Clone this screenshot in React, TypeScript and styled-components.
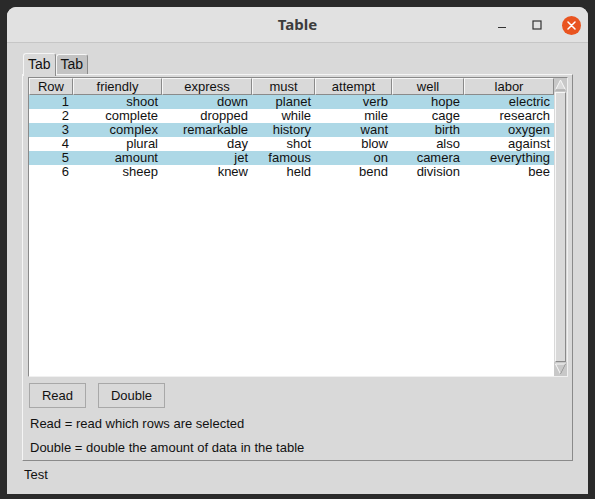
import React from "react";
import styled, { createGlobalStyle } from "styled-components";

const Global = createGlobalStyle`
  html, body { margin: 0; padding: 0; background: #2a2a2a; }
  body { font-family: "Liberation Sans", Arial, sans-serif; }
`;

const Desktop = styled.div`
  width: 595px;
  height: 499px;
  padding: 7px;
  box-sizing: border-box;
  background: #2a2a2a;
`;

const Window = styled.div`
  width: 581px;
  height: 487px;
  border-radius: 9px 9px 0 0;
  overflow: hidden;
  display: flex;
  flex-direction: column;
  background: #d9d9d9;
`;

const TitleBar = styled.div`
  height: 36px;
  flex: none;
  background: #e1e1e1;
  border-bottom: 1px solid #c6c6c6;
  box-sizing: border-box;
  display: flex;
  align-items: center;
  justify-content: center;
  position: relative;
`;

const Title = styled.div`
  font-family: "Noto Sans", "DejaVu Sans", sans-serif;
  font-weight: 700;
  font-size: 15px;
  color: #3c3c3c;
  margin-top: -1px;
`;

const Controls = styled.div`
  position: absolute;
  right: 0;
  top: 0;
  height: 36px;
  display: flex;
  align-items: center;
`;

const CtrlSlot = styled.div<{ $w: number }>`
  width: ${(p) => p.$w}px;
  height: 36px;
  display: flex;
  align-items: center;
  justify-content: center;
`;

const Close = styled.div`
  width: 19px;
  height: 19px;
  border-radius: 50%;
  background: #e95420;
  display: flex;
  align-items: center;
  justify-content: center;
`;

const Content = styled.div`
  flex: 1;
  display: flex;
  flex-direction: column;
  padding: 10px 0 0 15px;
`;

const TabRow = styled.div`
  display: flex;
  align-items: flex-end;
  height: 21px;
  padding-left: 1px;
  position: relative;
  z-index: 1;
`;

const TabBtn = styled.div<{ $active?: boolean }>`
  box-sizing: border-box;
  height: ${(p) => (p.$active ? 23 : 20)}px;
  margin-bottom: ${(p) => (p.$active ? -2 : 0)}px;
  padding: 0 4px;
  display: flex;
  align-items: flex-start;
  padding-top: ${(p) => (p.$active ? 2 : 1)}px;
  font-size: 14px;
  color: #111;
  background: ${(p) => (p.$active ? "#d9d9d9" : "#c3c3c3")};
  border: 1px solid #f5f5f5;
  border-right-color: #8c8c8c;
  border-bottom: none;
  border-radius: 3px 3px 0 0;
  line-height: 17px;
`;

const Panel = styled.div`
  width: 551px;
  height: 387px;
  box-sizing: border-box;
  border: 1px solid #f5f5f5;
  border-right-color: #8a8a8a;
  border-bottom-color: #8a8a8a;
  padding: 2px 0 0 5px;
  display: flex;
  flex-direction: column;
`;

const TableFrame = styled.div`
  width: 540px;
  height: 300px;
  box-sizing: border-box;
  border: 1px solid #8a8a8a;
  border-right-color: #f0f0f0;
  border-bottom-color: #f0f0f0;
  display: flex;
  background: #ffffff;
`;

const TableArea = styled.div`
  width: 525px;
  display: flex;
  flex-direction: column;
`;

const cols = "44px 89px 90px 63px 77px 72px 90px";

const HeaderRow = styled.div`
  display: grid;
  grid-template-columns: ${cols};
  height: 17px;
  background: #d9d9d9;
`;

const HeaderCell = styled.div`
  box-sizing: border-box;
  border: 1px solid #f7f7f7;
  border-right-color: #8a8a8a;
  border-bottom-color: #8a8a8a;
  font-size: 13px;
  line-height: 15px;
  text-align: center;
  color: #111;
`;

const DataRow = styled.div<{ $odd: boolean }>`
  display: grid;
  grid-template-columns: ${cols};
  height: 14px;
  background: ${(p) => (p.$odd ? "#add8e6" : "#ffffff")};
`;

const DataCell = styled.div`
  font-size: 13px;
  line-height: 14px;
  text-align: right;
  padding-right: 4px;
  color: #111;
  white-space: nowrap;
  overflow: hidden;
`;

const ScrollBar = styled.div`
  width: 13px;
  display: flex;
  flex-direction: column;
  background: #d9d9d9;
`;

const Arrow = styled.div`
  height: 14px;
  flex: none;
  background: #c8c8c8;
  display: flex;
  align-items: center;
  justify-content: center;
`;

const Thumb = styled.div`
  flex: 1;
  box-sizing: border-box;
  margin: 0 1px;
  border: 1px solid #f7f7f7;
  border-right-color: #8a8a8a;
  border-bottom-color: #8a8a8a;
  background: #d9d9d9;
`;

const ButtonRow = styled.div`
  display: flex;
  gap: 12px;
  margin-top: 6px;
  padding-left: 1px;
`;

const Button = styled.div<{ $w: number }>`
  width: ${(p) => p.$w}px;
  height: 25px;
  box-sizing: border-box;
  border: 1px solid #f2f2f2;
  border-right-color: #8a8a8a;
  border-bottom-color: #8a8a8a;
  outline: 1px solid #a8a8a8;
  outline-offset: -1px;
  background: #d9d9d9;
  font-size: 13px;
  color: #111;
  display: flex;
  align-items: center;
  justify-content: center;
`;

const Label = styled.div<{ $top?: number }>`
  font-size: 13px;
  line-height: 24px;
  color: #111;
  padding-left: 2px;
  margin-top: ${(p) => p.$top ?? 0}px;
`;

const Status = styled.div`
  font-size: 13px;
  line-height: 24px;
  color: #111;
  margin-top: 2px;
  padding-left: 2px;
`;

const headers = ["Row", "friendly", "express", "must", "attempt", "well", "labor"];
const rows = [
  ["1", "shoot", "down", "planet", "verb", "hope", "electric"],
  ["2", "complete", "dropped", "while", "mile", "cage", "research"],
  ["3", "complex", "remarkable", "history", "want", "birth", "oxygen"],
  ["4", "plural", "day", "shot", "blow", "also", "against"],
  ["5", "amount", "jet", "famous", "on", "camera", "everything"],
  ["6", "sheep", "knew", "held", "bend", "division", "bee"],
];

export default function App() {
  return (
    <>
      <Global />
      <Desktop>
        <Window>
          <TitleBar>
            <Title>Table</Title>
            <Controls>
              <CtrlSlot $w={34}>
                <svg width="10" height="10" viewBox="0 0 10 10">
                  <line x1="1" y1="7.5" x2="9" y2="7.5" stroke="#333" strokeWidth="1.2" />
                </svg>
              </CtrlSlot>
              <CtrlSlot $w={35}>
                <svg width="10" height="10" viewBox="0 0 10 10">
                  <rect x="1" y="1" width="8" height="8" fill="none" stroke="#333" strokeWidth="1.2" />
                </svg>
              </CtrlSlot>
              <CtrlSlot $w={34}>
                <Close>
                  <svg width="9" height="9" viewBox="0 0 9 9">
                    <path d="M1 1 L8 8 M8 1 L1 8" stroke="#fff" strokeWidth="1.5" strokeLinecap="round" />
                  </svg>
                </Close>
              </CtrlSlot>
            </Controls>
          </TitleBar>
          <Content>
            <TabRow>
              <TabBtn $active>Tab</TabBtn>
              <TabBtn>Tab</TabBtn>
            </TabRow>
            <Panel>
              <TableFrame>
                <TableArea>
                  <HeaderRow>
                    {headers.map((h) => (
                      <HeaderCell key={h}>{h}</HeaderCell>
                    ))}
                  </HeaderRow>
                  {rows.map((r, i) => (
                    <DataRow key={i} $odd={i % 2 === 0}>
                      {r.map((c, j) => (
                        <DataCell key={j}>{c}</DataCell>
                      ))}
                    </DataRow>
                  ))}
                </TableArea>
                <ScrollBar>
                  <Arrow>
                    <svg width="11" height="12" viewBox="0 0 11 12">
                      <path d="M5.5 1 L10.5 11 L0.5 11 Z" fill="#d9d9d9" stroke="#f7f7f7" strokeWidth="1" />
                      <path d="M10.5 11 L0.5 11" stroke="#8a8a8a" strokeWidth="1" />
                    </svg>
                  </Arrow>
                  <Thumb />
                  <Arrow>
                    <svg width="11" height="12" viewBox="0 0 11 12">
                      <path d="M0.5 1 L10.5 1 L5.5 11 Z" fill="#c8c8c8" stroke="#f7f7f7" strokeWidth="1" />
                      <path d="M10.5 1 L5.5 11" stroke="#8a8a8a" strokeWidth="1" />
                    </svg>
                  </Arrow>
                </ScrollBar>
              </TableFrame>
              <ButtonRow>
                <Button $w={57}>Read</Button>
                <Button $w={67}>Double</Button>
              </ButtonRow>
              <Label $top={4}>Read = read which rows are selected</Label>
              <Label>Double = double the amount of data in the table</Label>
            </Panel>
            <Status>Test</Status>
          </Content>
        </Window>
      </Desktop>
    </>
  );
}
